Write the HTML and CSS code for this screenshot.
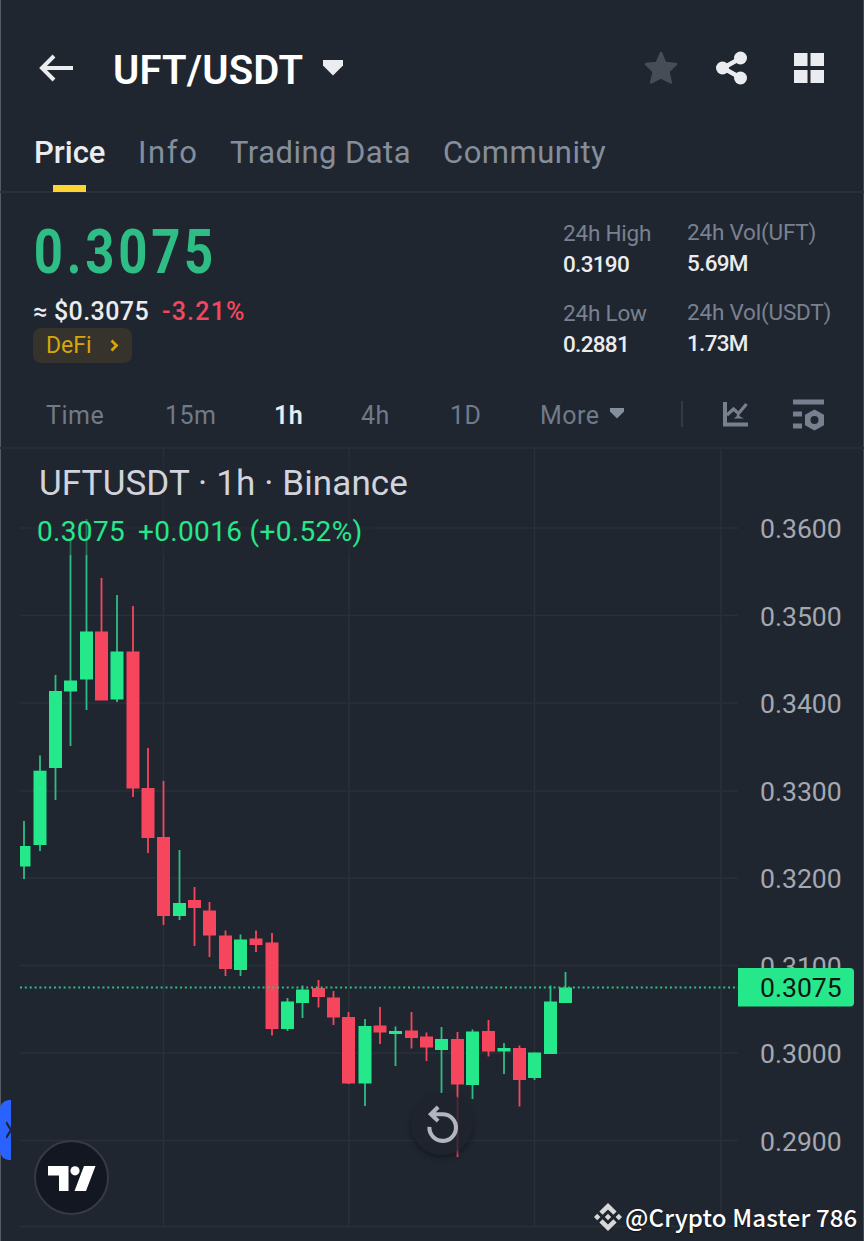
FILE: index.html
```html
<!DOCTYPE html>
<html lang="en">
<head>
  <meta charset="UTF-8">
  <meta name="viewport" content="width=device-width, initial-scale=1.0">
  <title>UFT/USDT</title>
  <link rel="stylesheet" href="styles.css">
</head>
<body>
  <div class="app">
    <!-- header -->
    <header class="header">
      <svg class="back" width="34" height="28" viewBox="0 0 34 28">
        <path d="M34 14H4M15 2L3 14l12 12" fill="none" stroke="#eaecef" stroke-width="4"/>
      </svg>
      <h1 class="pair">UFT/USDT</h1>
      <svg class="caret" width="20" height="16" viewBox="0 0 20 16">
        <path d="M0 0h20v5.500L10 15.500 0 5.500z" fill="#eaecef"/>
      </svg>
      <div class="tools">
        <svg width="34" height="34" viewBox="0 0 34 34">
          <path d="M17 2l4.300 10 10.700 1-7.700 7.500 2.500 11L17 26.500 7.200 31.500l2.500-11L2 13l10.700-1z" fill="#474d57" stroke="#474d57" stroke-width="2.500" stroke-linejoin="round"/>
        </svg>
        <svg width="32" height="34" viewBox="0 0 32 34">
          <path d="M25 7L7 17l18 10" fill="none" stroke="#eaecef" stroke-width="4.500"/>
          <circle cx="24.500" cy="7" r="6.500" fill="#eaecef"/>
          <circle cx="6.500" cy="17" r="6.500" fill="#eaecef"/>
          <circle cx="24.500" cy="27" r="6.500" fill="#eaecef"/>
        </svg>
        <svg width="30" height="30" viewBox="0 0 30 30">
          <path d="M0 0h13.500v13H0zM16.500 0H30v13H16.500zM0 17h13.500v13H0zM16.500 17H30v13H16.500z" fill="#eaecef"/>
        </svg>
      </div>
    </header>

    <!-- tabs -->
    <nav class="tabs">
      <a class="tab tab-price active">Price</a>
      <a class="tab tab-info">Info</a>
      <a class="tab tab-data">Trading Data</a>
      <a class="tab tab-community">Community</a>
    </nav>

    <!-- ticker -->
    <section class="ticker">
      <div class="quote">
        <div class="last">0.3075</div>
        <div class="fiat">
          <span class="approx">≈</span>
          <span class="usd">$0.3075</span>
          <span class="change">-3.21%</span>
        </div>
        <div class="tag">
          <span>DeFi</span>
          <svg width="9" height="13" viewBox="0 0 9 13">
            <path d="M1.500 1.500l5 5-5 5" fill="none" stroke="#d9a50c" stroke-width="2.800"/>
          </svg>
        </div>
      </div>
      <dl class="stats stats-range">
        <dt>24h High</dt>
        <dd>0.3190</dd>
        <dt>24h Low</dt>
        <dd>0.2881</dd>
      </dl>
      <dl class="stats stats-vol">
        <dt>24h Vol(UFT)</dt>
        <dd>5.69M</dd>
        <dt>24h Vol(USDT)</dt>
        <dd>1.73M</dd>
      </dl>
    </section>

    <!-- intervals -->
    <nav class="intervals">
      <span>Time</span>
      <span>15m</span>
      <span class="active">1h</span>
      <span>4h</span>
      <span>1D</span>
      <span>More</span>
      <svg class="more" width="14" height="11" viewBox="0 0 14 11">
        <path d="M0 0h14v3.500L7 10.500 0 3.500z" fill="#848e9c"/>
      </svg>
      <i class="divider"></i>
      <svg class="draw" width="25" height="26" viewBox="0 0 25 26">
        <path d="M2 1v22.500h23" fill="none" stroke="#76808f" stroke-width="4"/>
        <path d="M4 14l6.500-6 5 4.500 8-9.500" fill="none" stroke="#76808f" stroke-width="3.200"/>
        <path d="M14.500 11.500l2.500 4 4 2H10.500l3-2z" fill="#76808f"/>
      </svg>
      <svg class="settings" width="32" height="32" viewBox="0 0 32 32">
        <path d="M0 .500h31v5H0zM0 12.500h9v5H0zM0 24.500h9v5H0z" fill="#76808f"/>
        <path fill-rule="evenodd" d="M21.500 10.500l9.500 5.200v10.600l-9.500 5.200-9.500-5.200V15.700zM21.500 17a4 4 0 1 0 0 8 4 4 0 0 0 0-8z" fill="#76808f"/>
      </svg>
    </nav>

    <!-- chart -->
    <main class="chart">
      <svg class="plot" width="864" height="792" viewBox="0 449 864 792">
        <g id="grid"></g>
        <g id="candles"></g>
        <path class="last-line" d="M20 987.500H738"/>
        <g id="axis"></g>
        <path d="M738 968h112a4 4 0 0 1 4 4v30.500a4 4 0 0 1-4 4H738z" fill="#25e88b"/>
        <text class="axis-label axis-last" x="760" y="997">0.3075</text>
      </svg>

      <div class="legend">
        <div class="symbol">UFTUSDT · 1h · Binance</div>
        <div class="values"><span>0.3075</span><span>+0.0016 (+0.52%)</span></div>
      </div>

      <div class="reset">
        <svg width="33" height="39" viewBox="0 0 34 40">
          <path d="M3.500 22.500A13.700 13.700 0 1 0 17 9.500H5M12.500 2L5 9.500l7.500 7" fill="none" stroke="#b2b5be" stroke-width="4.200"/>
        </svg>
      </div>

      <div class="drawer">
        <svg width="5" height="18" viewBox="0 0 5 18">
          <path d="M0 1l5 8-5 8" fill="none" stroke="#1e2430" stroke-width="2.200"/>
        </svg>
      </div>

      <div class="tv-logo">
        <svg width="48" height="25" viewBox="0 0 48 25">
          <path d="M0 0h20.500v25H11V9.500H0zM36 0h11.500L38 25H26.500z" fill="#fff"/>
          <circle cx="27" cy="4.800" r="4.600" fill="#fff"/>
        </svg>
      </div>

      <div class="watermark">
        <svg width="28" height="28" viewBox="0 0 28 28">
          <path d="M14 0l8.600 8.600-3.200 3.200L14 6.400l-5.400 5.400-3.200-3.200zM14 28l8.600-8.600-3.200-3.200L14 21.600l-5.400-5.400-3.200 3.200zM3.200 10.800L6.400 14l-3.200 3.200L0 14zM24.800 10.800L28 14l-3.200 3.200-3.200-3.200zM14 10.800l3.200 3.200-3.200 3.200-3.200-3.200z" fill="#d8d8d8"/>
        </svg>
        <span>@Crypto Master 786</span>
      </div>
    </main>
  </div>
  <script src="chart.js"></script>
</body>
</html>
```
FILE: styles.css
```css
* {
  margin: 0;
  padding: 0;
  box-sizing: border-box;
}
body {
  background-color: #202630;
  font-family: Roboto, "Liberation Sans", sans-serif;
  color: #eaecef;
}
svg {
  display: block;
  flex: none;
}
.app {
  width: 864px;
  height: 1241px;
  overflow: hidden;
  box-shadow: inset 1px 0 #565a63, inset -1px 0 #444952;
}

/* header */
.header {
  display: flex;
  align-items: center;
  height: 136px;
  padding: 0 40px 0 39px;
}
.pair {
  width: 192px;
  margin-left: 40px;
  padding-top: 6px;
  font-size: 40px;
  font-weight: 600;
  line-height: 48px;
  letter-spacing: 0.2px;
  color: #fff;
  white-space: nowrap;
}
.caret {
  margin-left: 18px;
}
.tools {
  display: flex;
  align-items: center;
  margin-left: auto;
}
.tools svg:nth-child(2) {
  margin: 0 46px 0 38px;
}

/* tabs */
.tabs {
  display: flex;
  height: 57px;
  padding-left: 34px;
  border-bottom: 2px solid #2a3039;
}
.tab {
  position: relative;
  font-size: 31px;
  line-height: 33px;
  color: #848e9c;
  white-space: nowrap;
}
.tab-price {
  width: 104px;
}
.tab-info {
  width: 92px;
  letter-spacing: 1.6px;
}
.tab-data {
  width: 213px;
  letter-spacing: 0.45px;
}
.tab-community {
  letter-spacing: 0.5px;
}
.tab.active {
  font-weight: 500;
  color: #eaecef;
}
.tab.active::after {
  content: "";
  position: absolute;
  left: 19px;
  top: 49px;
  width: 33px;
  height: 7px;
  background-color: #fcd535;
}

/* ticker */
.ticker {
  display: flex;
  height: 190px;
  padding: 28px 0 0 33px;
}
.quote {
  width: 530px;
}
.last {
  padding-left: 1px;
  font-size: 62px;
  font-weight: 700;
  line-height: 62px;
  letter-spacing: 4.6px;
  color: #2ebd85;
  transform: scaleX(0.82);
  transform-origin: left;
}
.fiat {
  display: flex;
  height: 30px;
  margin-top: 13px;
  font-size: 25px;
  font-weight: 500;
  line-height: 32px;
}
.approx {
  width: 21px;
}
.usd {
  width: 108px;
  letter-spacing: 0.4px;
}
.change {
  letter-spacing: 1.2px;
  color: #f6465d;
}
.tag {
  display: flex;
  align-items: center;
  justify-content: space-between;
  width: 99px;
  height: 35px;
  margin-top: 2px;
  padding: 0 13px;
  border-radius: 8px;
  background-color: #35332c;
  font-size: 23px;
  color: #d9a50c;
}
.stats {
  margin-top: -2px;
  font-size: 22.5px;
  line-height: 28px;
  white-space: nowrap;
}
.stats-range {
  width: 124px;
}
.stats dt {
  color: #788190;
  letter-spacing: -0.2px;
}
.stats dd {
  margin: 3px 0 21px;
  font-weight: 500;
  letter-spacing: -0.7px;
}
.stats-vol {
  margin-top: -3px;
}

/* intervals */
.intervals {
  display: grid;
  grid-template-columns: 119px 109px 87px 89px 90px 70px 71px 42px 70px 32px;
  align-items: center;
  height: 66px;
  padding: 1px 0 0 46px;
  border-bottom: 2px solid #272d36;
  font-size: 25px;
  letter-spacing: 0.5px;
  color: #717a89;
}
.intervals .active {
  font-weight: 600;
  color: #eaecef;
}
.more {
  margin-top: -5px;
}
.divider {
  width: 2px;
  height: 26px;
  margin-top: -4px;
  background-color: #343a44;
}
.draw {
  margin-top: -3px;
}
.settings {
  margin-top: -2px;
}

/* chart */
.chart {
  position: relative;
  height: 792px;
}
.grid-line {
  fill: none;
  stroke: #2a2f38;
  stroke-width: 1.6;
}
.last-line {
  stroke: #2ebd85;
  stroke-width: 2;
  stroke-dasharray: 2 2.85;
}
.axis-label {
  font-size: 26.6px;
  fill: #a5a8b1;
}
.axis-last {
  fill: #0c1512;
}
.legend {
  position: absolute;
  left: 30px;
  top: 7px;
}
.symbol,
.values {
  width: max-content;
  background-color: rgba(32, 38, 48, 0.5);
  white-space: nowrap;
}
.symbol {
  height: 52px;
  padding: 0 10px 0 9px;
  font-size: 35px;
  line-height: 55px;
  letter-spacing: 0.12px;
  color: #d1d4dc;
}
.values {
  display: flex;
  gap: 13px;
  height: 47px;
  padding: 0 12px 0 7px;
  font-size: 28px;
  line-height: 47px;
  letter-spacing: 0.33px;
  color: #25e88b;
}
.reset {
  position: absolute;
  left: 411px;
  top: 644px;
  display: flex;
  align-items: center;
  justify-content: center;
  width: 62px;
  height: 62px;
  border-radius: 50%;
  background-color: rgba(31, 35, 45, 0.8);
  box-shadow: 0 3px 5px rgba(10, 12, 20, 0.5);
}
.drawer {
  position: absolute;
  left: 0;
  top: 651px;
  display: flex;
  align-items: center;
  justify-content: flex-end;
  width: 11px;
  height: 60px;
  border-radius: 9px 0 0 9px;
  background-color: #2962ff;
}
.tv-logo {
  position: absolute;
  left: 34px;
  top: 691px;
  display: flex;
  align-items: center;
  justify-content: center;
  width: 75px;
  height: 75px;
  padding-top: 1px;
  border: 2px solid #363a45;
  border-radius: 50%;
  background-color: #131722;
}
.watermark {
  position: absolute;
  left: 594px;
  top: 750px;
  display: flex;
  align-items: center;
  gap: 3px;
  font-family: "Noto Sans CJK SC", sans-serif;
  font-size: 24px;
  font-weight: 500;
  line-height: 35px;
  letter-spacing: 0.15px;
  color: #fff;
  text-shadow: 0 1px 2px rgba(0, 0, 0, 0.6);
  white-space: nowrap;
}
```
FILE: chart.js
```javascript
const SVG_NS = 'http://www.w3.org/2000/svg'
const UP = ['#25e88b', '#2ebd85']
const DOWN = ['#f6465d', '#f6465d']

// [left, bodyTop, bodyBottom, high, low, isUp]
const candles = [
  [17.5, 846, 866.5, 821, 879, 1],
  [33.5, 770.7, 845, 755.5, 851, 1],
  [49, 691, 768, 675, 800, 1],
  [64, 680.5, 691.5, 541, 746, 1],
  [80, 631.5, 679.5, 519, 710, 1],
  [95, 631.5, 700.5, 578, 700, 0],
  [110.5, 651.5, 699.5, 595, 702, 1],
  [126.5, 651.5, 788.5, 606, 797, 0],
  [141.5, 788, 838, 748, 853, 0],
  [157, 837, 916, 781, 925, 0],
  [173, 903, 916, 850, 920, 1],
  [188, 900, 908, 887, 946, 0],
  [203, 910.5, 935.5, 902, 957, 0],
  [219, 935.5, 969, 930.5, 976, 0],
  [234, 939.5, 970, 934.5, 976, 1],
  [249.5, 938.5, 945, 930.5, 952, 0],
  [265.5, 942.5, 1029, 933, 1035.5, 0],
  [281, 1001.5, 1029, 998, 1031, 1],
  [296, 989.5, 1003, 985.5, 1018, 1],
  [312, 988, 997, 980, 1007.5, 0],
  [327, 997.5, 1017.5, 991, 1025, 0],
  [342, 1017, 1083.5, 1012, 1084, 0],
  [358.5, 1026, 1083.5, 1019, 1106, 1],
  [373.5, 1025.5, 1032.5, 1007, 1044, 0],
  [389, 1031, 1034, 1026.5, 1066, 1],
  [405, 1030.5, 1038, 1012, 1048.5, 0],
  [420, 1036.5, 1047.5, 1032.5, 1061, 0],
  [435, 1039, 1050, 1027, 1093, 1],
  [451, 1039, 1084.5, 1032, 1157, 0],
  [466, 1031.5, 1085, 1029.5, 1099, 1],
  [482, 1031, 1051.5, 1020, 1056.5, 0],
  [497.5, 1048, 1051.5, 1043, 1074, 1],
  [513, 1048, 1080, 1045.5, 1106.5, 0],
  [528, 1052.5, 1078, 1052.5, 1080, 1],
  [544, 1001.5, 1054, 985.5, 1054, 1],
  [559, 987.5, 1003, 972, 1003, 1]
]

const rows = [
  [528, '0.3600'],
  [615.5, '0.3500'],
  [703, '0.3400'],
  [791, '0.3300'],
  [878, '0.3200'],
  [965.5, '0.3100'],
  [1053, '0.3000'],
  [1140.5, '0.2900'],
  [1226.5, '']
]
const columns = [163.5, 349, 534.5, 721]

function add(parent, name, attrs, text) {
  const el = document.createElementNS(SVG_NS, name)
  for (const key in attrs) el.setAttribute(key, attrs[key])
  if (text) el.textContent = text
  document.getElementById(parent).appendChild(el)
}

columns.forEach(x => add('grid', 'path', { class: 'grid-line', d: `M${x} 449V1226` }))
rows.forEach(([y, label]) => {
  add('grid', 'path', { class: 'grid-line', d: `M20 ${y}H738` })
  if (label) add('axis', 'text', { class: 'axis-label', x: 760, y: y + 10 }, label)
})

candles.forEach(([x, top, bottom, high, low, up]) => {
  const [body, wick] = up ? UP : DOWN
  // the first candle is cut by the left edge of the pane
  const left = Math.max(x, 20)
  add('candles', 'rect', { x: x + 5.6, y: high, width: 1.8, height: low - high, fill: wick })
  add('candles', 'rect', { x: left, y: top, width: x + 13 - left, height: bottom - top, fill: body })
})
```
